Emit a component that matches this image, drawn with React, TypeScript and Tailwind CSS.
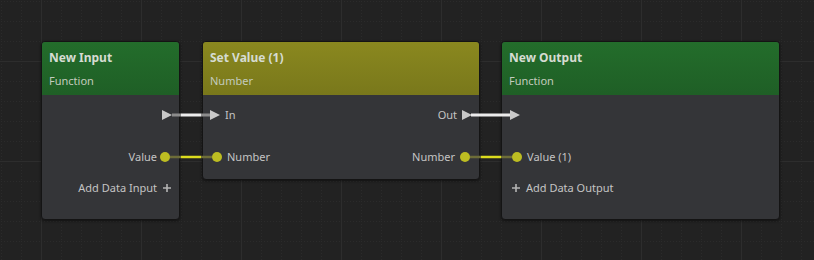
import React from "react";

const Tri = () => (
  <svg width="10" height="10" viewBox="0 0 10 10" className="shrink-0">
    <path d="M0 0 L10 5 L0 10 Z" fill="#c9c9c9" />
  </svg>
);

const Dot = () => (
  <svg width="10" height="10" viewBox="0 0 10 10" className="shrink-0">
    <circle cx="5" cy="5" r="5" fill="#bdbd22" />
  </svg>
);

const Plus = () => (
  <svg width="8" height="8" viewBox="0 0 8 8" className="shrink-0">
    <path d="M4 0 V8 M0 4 H8" stroke="#b4b4b4" strokeWidth="1.6" />
  </svg>
);

const Header = ({ title, sub, olive }: { title: string; sub: string; olive?: boolean }) => (
  <div
    className={
      "h-[53px] pt-[8px] pl-[7px] rounded-t-[3px] " +
      (olive
        ? "bg-gradient-to-b from-[#8a881f] to-[#79781b]"
        : "bg-gradient-to-b from-[#236d2b] to-[#1f5f26]")
    }
  >
    <div className="text-[12px] leading-[16px] font-bold text-[#d6dcd2]">{title}</div>
    <div className="mt-[7px] text-[11px] leading-[16px] text-[#c3cbbd]">{sub}</div>
  </div>
);

export default function App() {
  return (
    <div
      className="relative w-[814px] h-[260px] overflow-hidden bg-[#222222]"
      style={{ fontFamily: '"Noto Sans", "Open Sans", sans-serif' }}
    >
      <svg className="absolute inset-0" width="814" height="260">
        <defs>
          <pattern id="minor" x="1" y="1" width="20" height="20" patternUnits="userSpaceOnUse">
            <path d="M0 0.5 H20 M0.5 0 V20" stroke="#2b2b2b" strokeWidth="1" strokeDasharray="1 2" />
          </pattern>
          <pattern id="major" x="41" y="61" width="100" height="100" patternUnits="userSpaceOnUse">
            <path d="M0 0.5 H100 M0.5 0 V100" stroke="#2d2d2d" strokeWidth="1" />
          </pattern>
        </defs>
        <rect width="814" height="260" fill="url(#minor)" />
        <rect width="814" height="260" fill="url(#major)" />
      </svg>

      <div className="relative flex items-start pt-[41px] pl-[41px] text-[11px] text-[#c4c4c4]">
        {/* Node 1 */}
        <div className="w-[139px] h-[179px] rounded-[4px] border border-[#141414] bg-[#343538] shadow-[0_1px_3px_rgba(0,0,0,0.5)]">
          <Header title="New Input" sub="Function" />
          <div className="flex h-[40px] items-center justify-end pr-[7px]">
            <Tri />
          </div>
          <div className="flex h-[44px] items-center justify-end gap-[3px] pr-[9px]">
            <span>Value</span>
            <Dot />
          </div>
          <div className="flex h-[18px] items-center justify-end gap-[6px] pr-[8px]">
            <span>Add Data Input</span>
            <Plus />
          </div>
        </div>

        {/* Node 2 */}
        <div className="ml-[22px] w-[278px] h-[139px] rounded-[4px] border border-[#141414] bg-[#343538] shadow-[0_1px_3px_rgba(0,0,0,0.5)]">
          <Header title="Set Value (1)" sub="Number" olive />
          <div className="flex h-[40px] items-center justify-between pl-[7px] pr-[7px]">
            <div className="flex items-center gap-[5px]">
              <Tri />
              <span>In</span>
            </div>
            <div className="flex items-center gap-[5px]">
              <span>Out</span>
              <Tri />
            </div>
          </div>
          <div className="flex h-[44px] items-center justify-between pl-[9px] pr-[9px]">
            <div className="flex items-center gap-[5px]">
              <Dot />
              <span>Number</span>
            </div>
            <div className="flex items-center gap-[5px]">
              <span>Number</span>
              <Dot />
            </div>
          </div>
        </div>

        {/* Node 3 */}
        <div className="ml-[21px] w-[279px] h-[179px] rounded-[4px] border border-[#141414] bg-[#343538] shadow-[0_1px_3px_rgba(0,0,0,0.5)]">
          <Header title="New Output" sub="Function" />
          <div className="flex h-[40px] items-center pl-[8px]">
            <Tri />
          </div>
          <div className="flex h-[44px] items-center gap-[5px] pl-[10px]">
            <Dot />
            <span>Value (1)</span>
          </div>
          <div className="flex h-[18px] items-center gap-[6px] pl-[10px]">
            <Plus />
            <span>Add Data Output</span>
          </div>
        </div>
      </div>

      {/* connection lines */}
      <svg className="absolute inset-0 pointer-events-none" width="814" height="260">
        <line x1="172" y1="115" x2="181" y2="115" stroke="#8c8c8c" strokeWidth="3" />
        <line x1="181" y1="115" x2="201" y2="115" stroke="#ececec" strokeWidth="3" />
        <line x1="201" y1="115" x2="210" y2="115" stroke="#8c8c8c" strokeWidth="3" />
        <line x1="471" y1="115" x2="510" y2="115" stroke="#ececec" strokeWidth="3" />

        <line x1="170" y1="157" x2="181" y2="157" stroke="#6d6d38" strokeWidth="2.5" />
        <line x1="181" y1="157" x2="201" y2="157" stroke="#dcdc1e" strokeWidth="2.5" />
        <line x1="201" y1="157" x2="212" y2="157" stroke="#6d6d38" strokeWidth="2.5" />
        <line x1="470" y1="157" x2="481" y2="157" stroke="#6d6d38" strokeWidth="2.5" />
        <line x1="481" y1="157" x2="501" y2="157" stroke="#dcdc1e" strokeWidth="2.5" />
        <line x1="501" y1="157" x2="512" y2="157" stroke="#6d6d38" strokeWidth="2.5" />
      </svg>
    </div>
  );
}
